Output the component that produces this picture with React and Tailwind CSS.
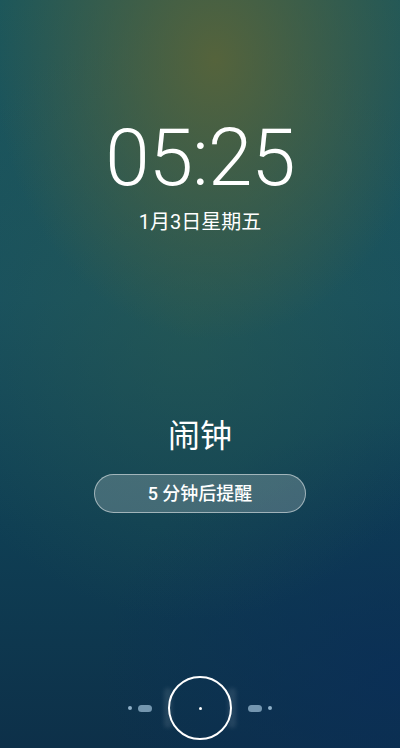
import React from "react";

export default function App() {
  return (
    <div
      className="relative w-[400px] h-[748px] overflow-hidden flex flex-col items-center text-white bg-[#15445a]"
      style={{
        backgroundImage:
          "radial-gradient(ellipse 220px 280px at 215px 60px, rgba(88,100,58,0.95), rgba(88,100,58,0) 100%), radial-gradient(ellipse 280px 300px at 190px 320px, rgba(44,92,78,0.55), rgba(44,92,78,0) 100%), radial-gradient(ellipse 300px 260px at 400px 680px, rgba(10,46,88,0.8), rgba(10,46,88,0) 100%), linear-gradient(180deg, #1d575a 0%, #175060 40%, #0f3f54 70%, #0d3049 100%)",
        fontFamily: "Roboto, 'Noto Sans CJK SC', sans-serif",
      }}
    >
      <div className="mt-[118px] text-[80px] leading-none font-light tracking-[-1px]">05:25</div>
      <div className="mt-[14px] text-[20px] leading-none">1月3日星期五</div>

      <div className="mt-[188px] text-[32px] leading-none">闹钟</div>
      <button className="mt-[22px] w-[212px] h-[39px] rounded-full border border-white/50 bg-white/20 text-[18px] font-medium text-white flex items-center justify-center">
        5 分钟后提醒
      </button>

      <div className="mt-auto mb-[8px] flex items-center gap-[6px]">
        <div className="w-[4px] h-[4px] rounded-full bg-[#8fb0c8]" />
        <div className="w-[14px] h-[7px] rounded-full bg-[#8fb0c8]/80 blur-[0.6px]" />
        <div className="w-[8px] h-[40px] rounded-full bg-white/10 blur-[2px] ml-[6px]" />
        <div className="-mx-[10px] w-[64px] h-[64px] rounded-full border-2 border-white flex items-center justify-center">
          <div className="w-[3px] h-[3px] rounded-full bg-white" />
        </div>
        <div className="w-[8px] h-[40px] rounded-full bg-white/10 blur-[2px] mr-[6px]" />
        <div className="w-[14px] h-[7px] rounded-full bg-[#8fb0c8]/80 blur-[0.6px]" />
        <div className="w-[4px] h-[4px] rounded-full bg-[#8fb0c8]" />
      </div>
    </div>
  );
}
